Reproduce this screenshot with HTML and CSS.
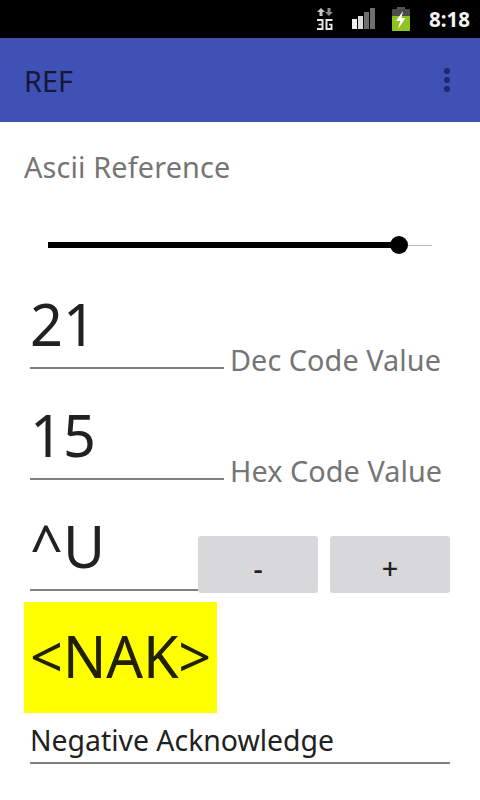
FILE: index.html
```html
<!DOCTYPE html>
<html lang="en">
<head>
<meta charset="utf-8">
<title>REF</title>
<link rel="stylesheet" href="styles.css">
</head>
<body>
<div class="status">
  <svg class="ico-net" width="16" height="23" viewBox="0 0 16 23">
    <path d="M4 0 L8 4 H5.5 V8 H2.5 V4 H0 Z" fill="#c8c8c8"/>
    <path d="M12 8 L16 4 H13.5 V0 H10.5 V4 H8 Z" fill="#8c8c8c"/>
    <path d="M0 11 H6.5 V22 H0 V20 H4.5 V17.3 H1.5 V15.7 H4.5 V13 H0 Z M8.5 11 H15.5 V13 H10.5 V20 H13.5 V17.3 H12 V15.7 H15.5 V22 H8.5 Z" fill="#e6e6e6"/>
  </svg>
  <svg class="ico-sig" width="23" height="22" viewBox="0 0 23 22">
    <rect x="0" y="11" width="5" height="10" fill="#f0f0f0"/>
    <rect x="6" y="8" width="5" height="13" fill="#dcdcdc"/>
    <rect x="12" y="4" width="5" height="17" fill="#6e6e6e"/>
    <rect x="18" y="0" width="5" height="21" fill="#6e6e6e"/>
  </svg>
  <svg class="ico-bat" width="18" height="24" viewBox="0 0 18 24">
    <rect x="5" y="0" width="8" height="3" fill="#555"/>
    <rect x="0" y="2" width="18" height="22" rx="1" fill="#4b4b4b"/>
    <rect x="0" y="9" width="18" height="15" rx="1" fill="#8fc31f"/>
    <path d="M11 4 L4 14 H8.2 L6 22 L13.5 11 H9.5 Z" fill="#fff"/>
  </svg>
  <span class="clock">8:18</span>
</div>
<header class="appbar">
  <span class="appbar-title">REF</span>
  <span class="menu"><i></i><i></i><i></i></span>
</header>
<main class="content">
  <div class="heading">Ascii Reference</div>
  <div class="slider"><div class="slider-fill"></div><div class="slider-thumb"></div><div class="slider-rest"></div></div>
  <div class="row row-dec">
    <div class="field field-code">21</div>
    <div class="label">Dec Code Value</div>
  </div>
  <div class="row row-hex">
    <div class="field field-code">15</div>
    <div class="label">Hex Code Value</div>
  </div>
  <div class="row row-ctl">
    <div class="field field-ctl">^U</div>
    <button class="btn btn-minus">-</button>
    <button class="btn btn-plus">+</button>
  </div>
  <div class="abbr">&lt;NAK&gt;</div>
  <div class="desc">Negative Acknowledge</div>
</main>
</body>
</html>
```
FILE: styles.css
```css
* { box-sizing: border-box; }
html, body { margin: 0; padding: 0; }
body {
  width: 480px;
  height: 800px;
  overflow: hidden;
  background: #fff;
  font-family: "Noto Sans", "Open Sans", sans-serif;
  color: #212121;
}
.status {
  height: 38px;
  background: #000;
  display: flex;
  align-items: center;
  justify-content: flex-end;
  padding-right: 10px;
}
.ico-net { margin-right: 19px; margin-top: 1px; }
.ico-sig { margin-right: 17px; }
.ico-bat { margin-right: 19px; }
.clock { font-size: 20.5px; font-weight: 700; color: #f4f4f4; line-height: 38px; }
.appbar {
  height: 84px;
  background: #3f51b5;
  display: flex;
  align-items: center;
  justify-content: space-between;
  padding: 0 30px 0 24px;
}
.appbar-title { font-size: 28.8px; color: #14183a; }
.menu { display: flex; flex-direction: column; gap: 3px; }
.menu i { display: block; width: 6px; height: 6px; border-radius: 50%; background: #1c2a6a; }
.content { padding: 0 30px 0 24px; }
.heading { font-size: 28.8px; letter-spacing: 0.15px; line-height: 36px; color: #757575; margin-top: 27px; }
.slider {
  display: flex;
  align-items: center;
  height: 20px;
  margin: 50px 18px 0 24px;
}
.slider-fill { width: 344px; height: 6px; background: #000; }
.slider-thumb { width: 18px; height: 18px; border-radius: 50%; background: #000; margin-left: -2px; flex: none; }
.slider-rest { flex: 1; height: 1px; background: #bdbdbd; }
.row { display: flex; align-items: flex-end; }
.row-dec { margin-top: 33px; height: 81px; }
.row-hex { margin-top: 30px; height: 81px; }
.row-ctl { margin-top: 30px; height: 81px; }
.field {
  margin-left: 6px;
  height: 81px;
  border-bottom: 2px solid #808080;
  font-size: 57.6px;
  line-height: 71px;
  color: #212121;
}
.field-code { width: 194px; }
.field-ctl { width: 168px; }
.label { font-size: 28.8px; letter-spacing: 0.07px; line-height: 36px; color: #757575; margin-left: 6px; margin-bottom: -9px; }
.btn {
  width: 120px;
  height: 57px;
  border: 0;
  border-radius: 3px;
  background: #d8d7da;
  font: 500 28.8px "Noto Sans", "Open Sans", sans-serif;
  color: #212121;
  padding: 6px 0 0;
  margin-bottom: -2px;
}
.btn-plus { margin-left: 12px; }
.abbr {
  width: 193px;
  height: 111px;
  margin-top: 11px;
  background: #ff0;
  font-size: 57.6px;
  letter-spacing: -0.2px;
  line-height: 107px;
  padding-left: 6px;
  color: #212100;
  white-space: nowrap;
}
.desc {
  margin: 6px 0 0 6px;
  height: 45px;
  border-bottom: 2px solid #808080;
  font-size: 28.4px;
  line-height: 42px;
}
```
